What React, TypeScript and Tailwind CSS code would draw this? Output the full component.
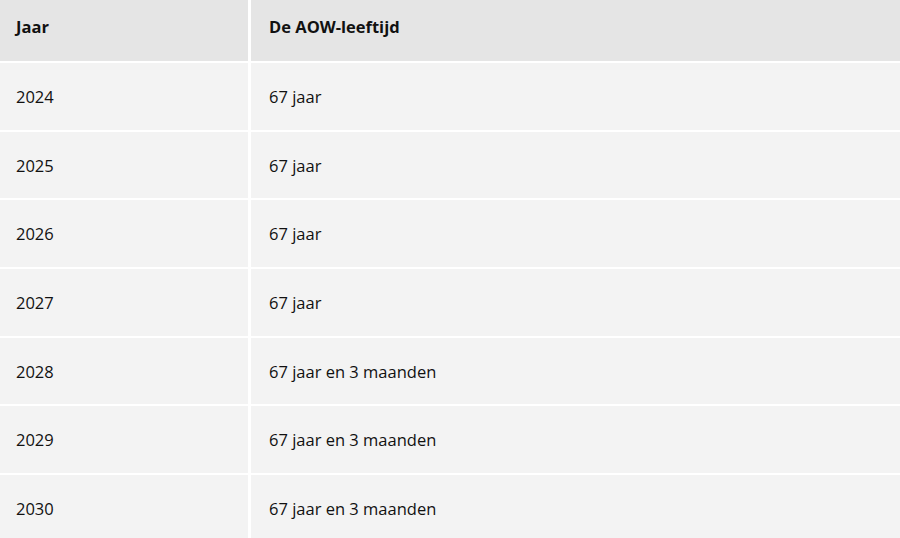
import { Fragment } from 'react';

const rows = [
  { year: '2024', age: '67 jaar' },
  { year: '2025', age: '67 jaar' },
  { year: '2026', age: '67 jaar' },
  { year: '2027', age: '67 jaar' },
  { year: '2028', age: '67 jaar en 3 maanden' },
  { year: '2029', age: '67 jaar en 3 maanden' },
  { year: '2030', age: '67 jaar en 3 maanden' },
];

export default function App() {
  return (
    <div className="w-[900px] h-[538px] overflow-hidden bg-white font-['Open_Sans',sans-serif] text-[16.5px] text-[#111]">
      <div className="grid grid-cols-[248px_1fr] gap-x-[3px] gap-y-[2px]">
        {/* Header */}
        <div className="h-[61px] bg-[#e5e5e5] px-4 pb-[6px] flex items-center font-bold">Jaar</div>
        <div className="h-[61px] bg-[#e5e5e5] px-[18px] pb-[6px] flex items-center font-bold">De AOW-leeftijd</div>

        {rows.map((row) => (
          <Fragment key={row.year}>
            <div className="h-[66.67px] bg-[#f3f3f3] px-4 pt-[2px] flex items-center">{row.year}</div>
            <div className="h-[66.67px] bg-[#f3f3f3] px-[18px] pt-[2px] flex items-center">{row.age}</div>
          </Fragment>
        ))}
      </div>
    </div>
  );
}
